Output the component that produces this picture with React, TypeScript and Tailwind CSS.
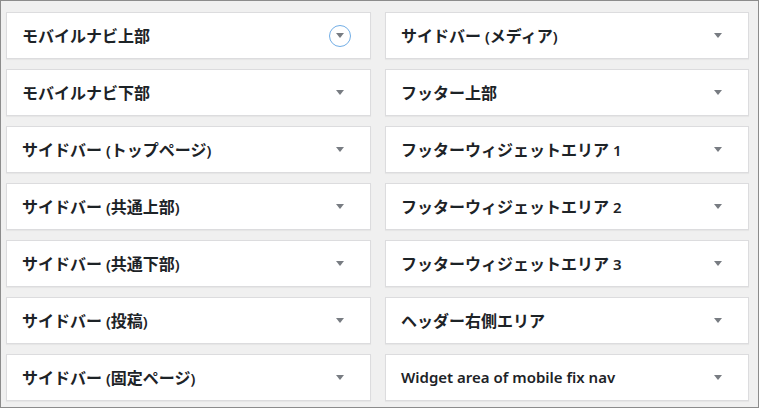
const areas: [string, string][] = [
  ["モバイルナビ上部", "サイドバー (メディア)"],
  ["モバイルナビ下部", "フッター上部"],
  ["サイドバー (トップページ)", "フッターウィジェットエリア 1"],
  ["サイドバー (共通上部)", "フッターウィジェットエリア 2"],
  ["サイドバー (共通下部)", "フッターウィジェットエリア 3"],
  ["サイドバー (投稿)", "ヘッダー右側エリア"],
  ["サイドバー (固定ページ)", "Widget area of mobile fix nav"],
];

// Japanese glyphs run a bit wider in the original, so give them their own size
function Title({ text }: { text: string }) {
  const parts = text.split(/([\u3000-\u9fff\uff00-\uffef]+)/).filter(Boolean);
  return (
    <h3 className="text-[15px] font-semibold text-[#1d2327]">
      {parts.map((p, i) =>
        /[\u3000-\u9fff\uff00-\uffef]/.test(p) ? (
          <span key={i} className="text-[16px]">
            {p}
          </span>
        ) : (
          <span key={i}>{p}</span>
        )
      )}
    </h3>
  );
}

function Arrow({ focused }: { focused?: boolean }) {
  return (
    <span
      className={
        "flex h-[22px] w-[22px] items-center justify-center rounded-full border-[1.5px] " +
        (focused ? "border-[#72aee6]" : "border-transparent")
      }
    >
      <svg width="8" height="5" viewBox="0 0 8 5">
        <path d="M0 0h8L4 5z" fill="#787c82" />
      </svg>
    </span>
  );
}

function WidgetArea({ title, focused }: { title: string; focused?: boolean }) {
  return (
    <div className="flex h-[47px] items-center justify-between border border-[#dcdcde] bg-white pl-[15px] pr-[19px] shadow-[0_1px_1px_rgba(0,0,0,0.04)]">
      <Title text={title} />
      <Arrow focused={focused} />
    </div>
  );
}

export default function App() {
  return (
    <div className="h-[408px] w-[759px] border border-[#8c8c8c] bg-[#f0f0f0] pl-[5px] pt-[11px] font-['Noto_Sans','Noto_Sans_CJK_JP',sans-serif]">
      <div className="grid grid-cols-[365px_364px] gap-x-[14px] gap-y-[10px]">
        {areas.map(([left, right], i) => (
          <div key={i} className="contents">
            <WidgetArea title={left} focused={i === 0} />
            <WidgetArea title={right} />
          </div>
        ))}
      </div>
    </div>
  );
}
